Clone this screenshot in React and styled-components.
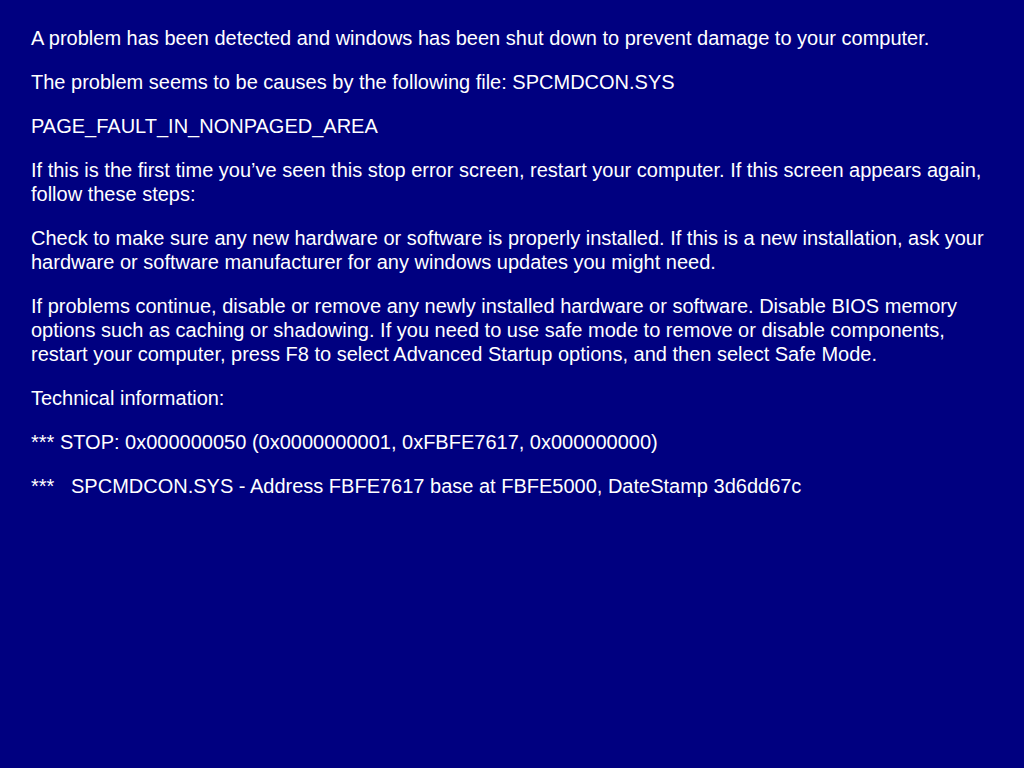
import React from "react";
import styled, { createGlobalStyle } from "styled-components";

const Global = createGlobalStyle`
  html, body { margin: 0; padding: 0; background: #000080; }
  body { font-family: "Liberation Sans", Arial, sans-serif; }
`;

const Screen = styled.main`
  box-sizing: border-box;
  width: 1024px;
  min-height: 768px;
  background: #000080;
  color: #ffffff;
  padding: 26px 24px 0 31px;
  display: flex;
  flex-direction: column;
  gap: 20px;
`;

const Para = styled.p`
  margin: 0;
  font-size: 20px;
  line-height: 24px;
  white-space: ${(p) => (p.$pre ? "pre" : "normal")};
`;

export default function App() {
  return (
    <>
      <Global />
      <Screen>
        <Para>A problem has been detected and windows has been shut down to prevent damage to your computer.</Para>
        <Para>The problem seems to be causes by the following file: SPCMDCON.SYS</Para>
        <Para>PAGE_FAULT_IN_NONPAGED_AREA</Para>
        <Para>If this is the first time you’ve seen this stop error screen, restart your computer. If this screen appears again, follow these steps:</Para>
        <Para>Check to make sure any new hardware or software is properly installed. If this is a new installation, ask your hardware or software manufacturer for any windows updates you might need.</Para>
        <Para>If problems continue, disable or remove any newly installed hardware or software. Disable BIOS memory options such as caching or shadowing. If you need to use safe mode to remove or disable components, restart your computer, press F8 to select Advanced Startup options, and then select Safe Mode.</Para>
        <Para>Technical information:</Para>
        <Para>*** STOP: 0x000000050 (0x0000000001, 0xFBFE7617, 0x000000000)</Para>
        <Para $pre>{"***   SPCMDCON.SYS - Address FBFE7617 base at FBFE5000, DateStamp 3d6dd67c"}</Para>
      </Screen>
    </>
  );
}
